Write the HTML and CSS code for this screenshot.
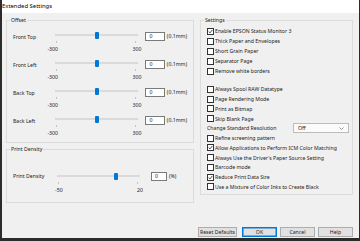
FILE: index.html
```html
<!DOCTYPE html>
<html>
<head>
<meta charset="utf-8">
<link rel="stylesheet" href="styles.css">
</head>
<body>
<div class="window">
  <div class="titlebar">Extended Settings</div>
  <div class="body">
    <div class="main">
      <div class="left">
        <fieldset class="group offset">
          <legend>Offset</legend>
          <div class="srow">
            <span class="slabel">Front Top</span>
            <div class="slider">
              <div class="track"><span class="thumb" style="left:50%"></span></div>
              <div class="ticks"><i></i><i></i></div>
              <div class="nums"><span>-300</span><span>300</span></div>
            </div>
            <div class="field">0</div>
            <span class="unit">(0.1mm)</span>
          </div>
          <div class="srow">
            <span class="slabel">Front Left</span>
            <div class="slider">
              <div class="track"><span class="thumb" style="left:50%"></span></div>
              <div class="ticks"><i></i><i></i></div>
              <div class="nums"><span>-300</span><span>300</span></div>
            </div>
            <div class="field">0</div>
            <span class="unit">(0.1mm)</span>
          </div>
          <div class="srow">
            <span class="slabel">Back Top</span>
            <div class="slider">
              <div class="track"><span class="thumb" style="left:50%"></span></div>
              <div class="ticks"><i></i><i></i></div>
              <div class="nums"><span>-300</span><span>300</span></div>
            </div>
            <div class="field">0</div>
            <span class="unit">(0.1mm)</span>
          </div>
          <div class="srow">
            <span class="slabel">Back Left</span>
            <div class="slider">
              <div class="track"><span class="thumb" style="left:50%"></span></div>
              <div class="ticks"><i></i><i></i></div>
              <div class="nums"><span>-300</span><span>300</span></div>
            </div>
            <div class="field">0</div>
            <span class="unit">(0.1mm)</span>
          </div>
        </fieldset>
        <fieldset class="group density">
          <legend>Print Density</legend>
          <div class="srow density-row">
            <span class="slabel">Print Density</span>
            <div class="slider">
              <div class="track"><span class="thumb" style="left:71.4%"></span></div>
              <div class="ticks"><i></i><i></i></div>
              <div class="nums short"><span>-50</span><span>20</span></div>
            </div>
            <div class="field">0</div>
            <span class="unit">(%)</span>
          </div>
        </fieldset>
      </div>
      <fieldset class="group settings">
        <legend>Settings</legend>
        <div class="list1">
          <div class="cb"><span class="box"><svg viewBox="0 0 5 5"><path d="M0.6 2.5 L2 3.9 L4.4 0.9"/></svg></span><span>Enable EPSON Status Monitor 3</span></div>
          <div class="cb"><span class="box"></span><span>Thick Paper and Envelopes</span></div>
          <div class="cb"><span class="box"></span><span>Short Grain Paper</span></div>
          <div class="cb"><span class="box"></span><span>Separator Page</span></div>
          <div class="cb"><span class="box"></span><span>Remove white borders</span></div>
        </div>
        <div class="list2">
          <div class="cb"><span class="box"></span><span>Always Spool RAW Datatype</span></div>
          <div class="cb"><span class="box"></span><span>Page Rendering Mode</span></div>
          <div class="cb"><span class="box"></span><span>Print as Bitmap</span></div>
          <div class="cb"><span class="box"></span><span>Skip Blank Page</span></div>
          <div class="cb res"><span>Change Standard Resolution</span><div class="select"><span>Off</span><svg viewBox="0 0 5 3"><polyline points="0.5,0.5 2.5,2.5 4.5,0.5"/></svg></div></div>
          <div class="cb"><span class="box"></span><span>Refine screening pattern</span></div>
          <div class="cb"><span class="box"><svg viewBox="0 0 5 5"><path d="M0.6 2.5 L2 3.9 L4.4 0.9"/></svg></span><span>Allow Applications to Perform ICM Color Matching</span></div>
          <div class="cb"><span class="box"></span><span>Always Use the Driver's Paper Source Setting</span></div>
          <div class="cb"><span class="box"></span><span>Barcode mode</span></div>
          <div class="cb"><span class="box"><svg viewBox="0 0 5 5"><path d="M0.6 2.5 L2 3.9 L4.4 0.9"/></svg></span><span>Reduce Print Data Size</span></div>
          <div class="cb"><span class="box"></span><span>Use a Mixture of Color Inks to Create Black</span></div>
        </div>
      </fieldset>
    </div>
    <div class="buttons">
      <div class="btn reset">Reset Defaults</div>
      <div class="btn ok">OK</div>
      <div class="btn">Cancel</div>
      <div class="btn">Help</div>
    </div>
  </div>
</div>
</body>
</html>
```
FILE: styles.css
```css
* { box-sizing: border-box; }
html, body { margin: 0; padding: 0; }
body {
  width: 360px;
  height: 241px;
  overflow: hidden;
  background: #f0f0f0;
  font-family: "Noto Sans", "DejaVu Sans", sans-serif;
  font-size: 5.2px;
  color: #222;
}
.window {
  width: 360px;
  height: 241px;
  border-left: 2px solid #2b2b2b;
  border-right: 1px solid #2b2b2b;
  border-bottom: 3px solid #2b2b2b;
  background: #f0f0f0;
  display: flex;
  flex-direction: column;
}
.titlebar {
  height: 13px;
  background: #fff;
  font-size: 5.9px;
  line-height: 12px;
  color: #000;
  white-space: nowrap;
}
.body {
  flex: 1;
  display: flex;
  flex-direction: column;
  padding: 3px 6px 1px 4px;
}
.main {
  display: flex;
  gap: 6px;
}
.left {
  width: 188px;
  display: flex;
  flex-direction: column;
  gap: 2px;
}
fieldset.group {
  margin: 0;
  min-width: 0;
  border: 1px solid #dcdcdc;
}
legend {
  font-size: 5.2px;
  line-height: 8px;
  padding: 0 1px;
  margin-left: -3px;
  white-space: nowrap;
}
.offset { padding: 7px 6px 5px 6px; display: flex; flex-direction: column; gap: 6px; }
.density { padding: 19px 6px 8px 6px; }
.settings { width: 153px; height: 179px; padding: 2px 3px 2px 6px; }

.srow {
  display: flex;
  align-items: flex-start;
  height: 22px;
  white-space: nowrap;
}
.slabel { width: 44px; margin-top: 3px; line-height: 7px; }
.slider { width: 86px; }
.track { position: relative; width: 83px; height: 8px; }
.track::before {
  content: "";
  position: absolute;
  left: 0; right: 0; top: 3px;
  height: 2px;
  background: #dadada;
}
.thumb {
  position: absolute;
  top: 0.5px;
  width: 4px;
  height: 7px;
  margin-left: -2px;
  background: #0078d7;
  border-radius: 1px;
}
.ticks {
  display: flex;
  justify-content: space-between;
  width: 83px;
  height: 2px;
  margin-top: 2px;
  padding: 0 2px 0 1px;
}
.ticks i { display: block; width: 1px; height: 2px; background: #c4c4c4; }
.nums {
  display: flex;
  justify-content: space-between;
  width: 94px;
  margin-left: -8px;
  margin-top: 3px;
  line-height: 7px;
}
.nums.short { width: 88px; margin-left: -2px; }
.field {
  width: 20px;
  height: 9px;
  margin-left: 4px;
  margin-top: 1px;
  border: 1px solid #7a7a7a;
  background: #fff;
  line-height: 7px;
  padding-left: 3px;
}
.unit { margin-left: 2px; margin-top: 2px; line-height: 7px; }
.density-row .slabel { margin-top: 0.5px; }
.density-row .field { width: 16px; margin-left: 8px; margin-top: 0; }
.density-row .unit { margin-top: 0.5px; }

.cb {
  display: flex;
  align-items: center;
  gap: 1px;
  height: 10px;
  white-space: nowrap;
}
.list2 { margin-top: 8.6px; }
.list2 .cb { height: 9.75px; }
.box {
  width: 7px;
  height: 7px;
  border: 1px solid #333;
  background: #fff;
  display: flex;
  flex: none;
}
.box svg { width: 5px; height: 5px; fill: none; stroke: #222; stroke-width: 0.8; }
.cb.res { justify-content: space-between; }
.select {
  width: 56px;
  height: 10px;
  border: 1px solid #bcbcbc;
  background: #fbfbfb;
  display: flex;
  align-items: center;
  justify-content: space-between;
  padding: 0 4px 0 4px;
}
.select svg { width: 5px; height: 3px; fill: none; stroke: #555; stroke-width: 0.6; }

.buttons {
  margin-top: auto;
  display: flex;
  justify-content: flex-end;
  gap: 3px;
}
.btn {
  width: 35px;
  height: 10px;
  border: 1px solid #adadad;
  background: #e1e1e1;
  text-align: center;
  line-height: 8px;
  white-space: nowrap;
}
.btn.reset { width: 39px; margin-right: 2px; }
.btn.ok { border-color: #0078d7; box-shadow: inset 0 0 0 0.5px #0078d7; }
```
